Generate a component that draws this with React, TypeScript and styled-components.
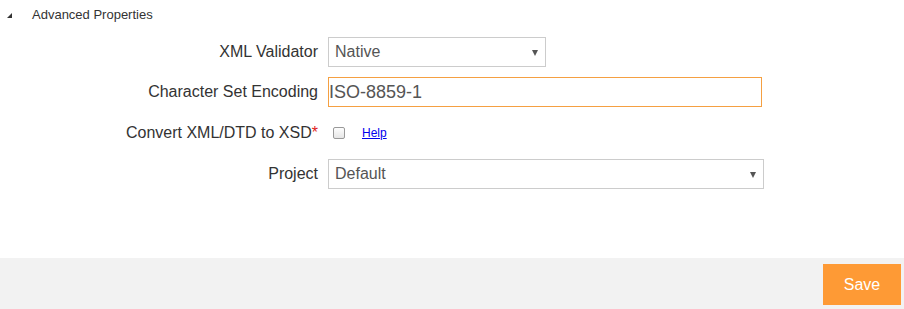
import styled, { createGlobalStyle } from 'styled-components'

const GlobalStyle = createGlobalStyle`
  html, body {
    margin: 0;
    padding: 0;
    background: #fff;
  }
  body {
    font-family: "Liberation Sans", Arial, sans-serif;
    color: #333;
  }
`

type Option = { label: string }

export default function App() {
  return (
    <>
      <GlobalStyle />
      <Page>
        <SectionHeader>
          <Caret />
          <SectionTitle>Advanced Properties</SectionTitle>
        </SectionHeader>
        <Form>
          <Row>
            <Label>XML Validator</Label>
            <Select width={218} value="Native" options={[{ label: 'Native' }]} />
          </Row>
          <Row>
            <Label>Character Set Encoding</Label>
            <TextInput defaultValue="ISO-8859-1" />
          </Row>
          <Row tall>
            <Label>
              Convert XML/DTD to XSD<Required>*</Required>
            </Label>
            <CheckWrap>
              <Check type="checkbox" />
              <HelpLink href="#">Help</HelpLink>
            </CheckWrap>
          </Row>
          <Row>
            <Label>Project</Label>
            <Select width={436} value="Default" options={[{ label: 'Default' }]} />
          </Row>
        </Form>
        <Footer>
          <SaveButton>Save</SaveButton>
        </Footer>
      </Page>
    </>
  )
}

function Select({ width, value, options }: { width: number; value: string; options: Option[] }) {
  return (
    <SelectBox $width={width}>
      <SelectText>{value}</SelectText>
      <Arrow />
      <HiddenList>
        {options.map((o) => (
          <span key={o.label}>{o.label}</span>
        ))}
      </HiddenList>
    </SelectBox>
  )
}

const Page = styled.div`
  width: 904px;
  height: 309px;
  display: flex;
  flex-direction: column;
`

const SectionHeader = styled.div`
  height: 29px;
  display: flex;
  align-items: center;
  padding-left: 7px;
`

const Caret = styled.span`
  width: 0;
  height: 0;
  border-left: 5px solid transparent;
  border-bottom: 5px solid #333;
  margin-right: 20px;
  margin-top: 1px;
`

const SectionTitle = styled.span`
  font-size: 13px;
  color: #333;
`

const Form = styled.div`
  display: flex;
  flex-direction: column;
  gap: 10px;
  padding-top: 8px;
  flex: 1;
`

const Row = styled.div<{ tall?: boolean }>`
  display: flex;
  align-items: center;
  height: ${(p) => (p.tall ? '32px' : '30px')};
  gap: 10px;
`

const Label = styled.label`
  width: 318px;
  text-align: right;
  font-size: 16px;
  color: #333;
  white-space: nowrap;
`

const Required = styled.span`
  color: #e02020;
`

const SelectBox = styled.div<{ $width: number }>`
  position: relative;
  box-sizing: border-box;
  width: ${(p) => p.$width}px;
  height: 30px;
  border: 1px solid #ccc;
  background: #fff;
  display: flex;
  align-items: center;
  padding-left: 6px;
`

const SelectText = styled.span`
  font-size: 16px;
  color: #555;
  flex: 1;
`

const Arrow = styled.span`
  width: 0;
  height: 0;
  border-left: 3.5px solid transparent;
  border-right: 3.5px solid transparent;
  border-top: 6px solid #555;
  margin-right: 7px;
  margin-top: 1px;
`

const HiddenList = styled.div`
  display: none;
`

const TextInput = styled.input`
  box-sizing: border-box;
  width: 434px;
  height: 30px;
  border: 1px solid #f5a042;
  outline: none;
  padding: 0 0 0 0;
  font-family: "Liberation Sans", Arial, sans-serif;
  font-size: 18px;
  color: #555;
  background: #fff;
`

const CheckWrap = styled.div`
  display: flex;
  align-items: center;
  padding-left: 5px;
  gap: 17px;
`

const Check = styled.input`
  appearance: none;
  margin: 0;
  width: 12px;
  height: 12px;
  border: 1px solid #999;
  border-radius: 2px;
  background: linear-gradient(#fdfdfd, #e6e6e6);
`

const HelpLink = styled.a`
  font-size: 12px;
  color: #0000ee;
  text-decoration: underline;
`

const Footer = styled.div`
  height: 51px;
  background: #f2f2f2;
  display: flex;
  justify-content: flex-end;
  align-items: flex-start;
  padding: 6px 3px 0 0;
  box-sizing: border-box;
`

const SaveButton = styled.button`
  width: 78px;
  height: 41px;
  border: none;
  background: #fe9a35;
  color: #fff;
  font-family: "Liberation Sans", Arial, sans-serif;
  font-size: 16px;
  cursor: pointer;
`
